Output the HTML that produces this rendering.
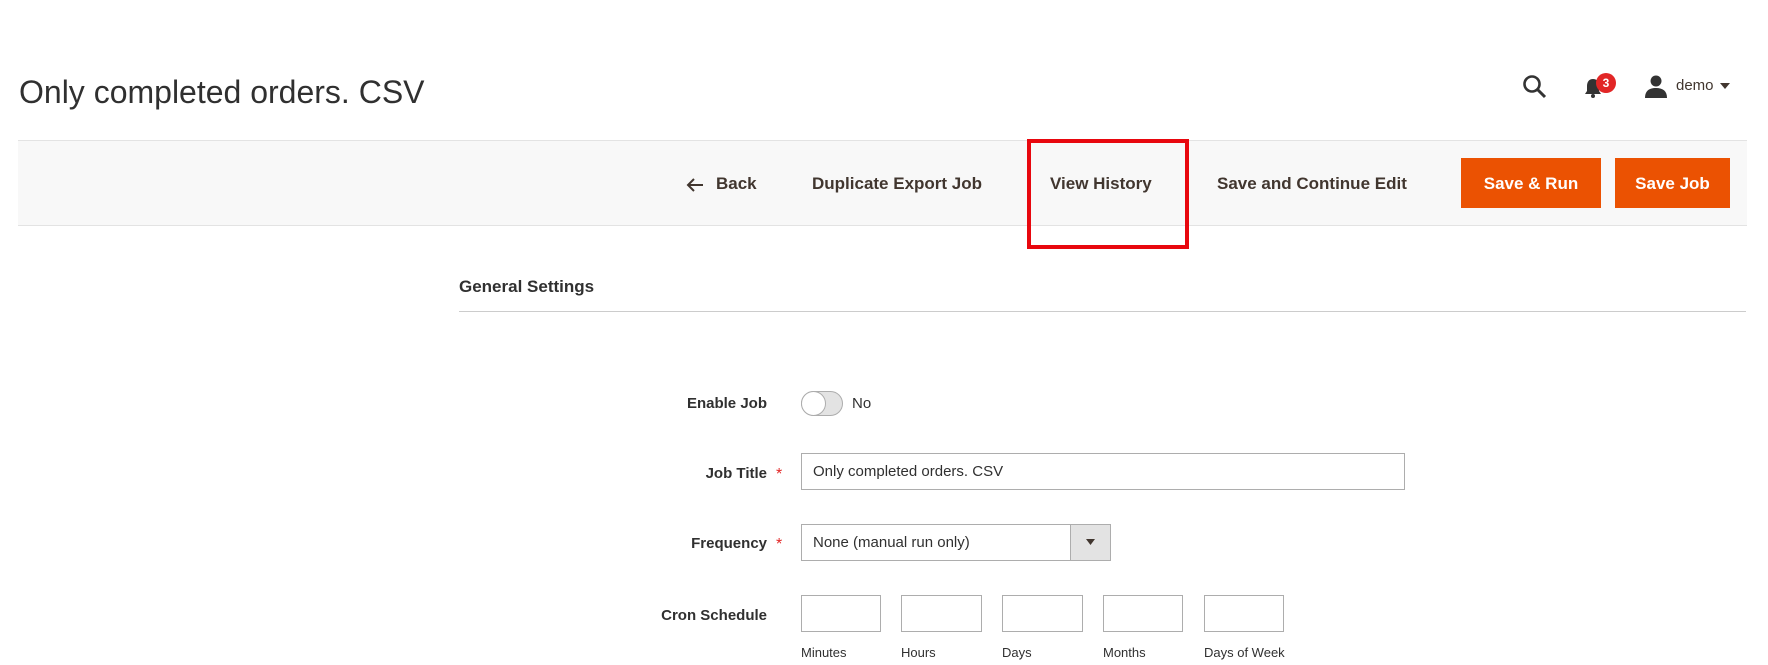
<!DOCTYPE html>
<html><head><meta charset="utf-8"><style>
*{margin:0;padding:0;box-sizing:border-box}
body{width:1768px;height:665px;background:#fff;font-family:"Liberation Sans",sans-serif;color:#303030;position:relative;overflow:hidden}
.a{position:absolute;white-space:nowrap}
.tb{left:18px;top:140px;width:1729px;height:86px;background:#f8f8f8;border-top:1px solid #e3e3e3;border-bottom:1px solid #e3e3e3}
.tl{font-size:17px;font-weight:bold;color:#41362f;top:174px}
.btn{background:#eb5202;color:#fff;font-size:17px;font-weight:bold;top:158px;height:50px;line-height:52px;text-align:center}
.lbl{font-size:15px;font-weight:bold;color:#303030;text-align:right;width:200px}
.star{color:#e22626;font-size:16px}
.inp{border:1px solid #adadad;background:#fff}
.sm{font-size:13px;color:#303030;top:645px}
</style></head><body>
<div class="a" style="left:19px;top:74px;font-size:32px;color:#303030">Only completed orders. CSV</div>

<svg class="a" style="left:1522px;top:74px" width="26" height="26" viewBox="0 0 26 26"><circle cx="10" cy="10" r="7.5" fill="none" stroke="#333" stroke-width="2.6"/><path d="M15.5 15.5L23 23" stroke="#333" stroke-width="3"/></svg>
<svg class="a" style="left:1583px;top:77px" width="20" height="22" viewBox="0 0 20 22"><path d="M10 2c-4 0-6 3-6 7v5l-2 3h16l-2-3V9c0-4-2-7-6-7z" fill="#333"/><circle cx="10" cy="19" r="2" fill="#333"/></svg>
<div class="a" style="left:1596px;top:73px;width:20px;height:20px;border-radius:50%;background:#e22626;color:#fff;font-size:12px;font-weight:bold;text-align:center;line-height:20px">3</div>
<svg class="a" style="left:1644px;top:74px" width="24" height="24" viewBox="0 0 24 24"><circle cx="12" cy="7" r="5.5" fill="#333"/><path d="M1 24c0-7 4-10 11-10s11 3 11 10z" fill="#333"/></svg>
<div class="a" style="left:1676px;top:77px;font-size:15px;color:#41362f">demo</div>
<svg class="a" style="left:1720px;top:83px" width="10" height="6"><path d="M0 0h10L5 6z" fill="#41362f"/></svg>

<div class="a tb"></div>
<svg class="a" style="left:686px;top:178px" width="18" height="14" viewBox="0 0 18 14"><path d="M17 7H3M8 1L2 7l6 6" fill="none" stroke="#41362f" stroke-width="2"/></svg>
<div class="a tl" style="left:716px">Back</div>
<div class="a tl" style="left:812px">Duplicate Export Job</div>
<div class="a tl" style="left:1050px">View History</div>
<div class="a tl" style="left:1217px">Save and Continue Edit</div>
<div class="a btn" style="left:1461px;width:140px">Save &amp; Run</div>
<div class="a btn" style="left:1615px;width:115px">Save Job</div>
<div class="a" style="left:1027px;top:139px;width:162px;height:110px;border:4px solid #e8070e"></div>

<div class="a" style="left:459px;top:277px;font-size:17px;font-weight:bold;color:#303030">General Settings</div>
<div class="a" style="left:459px;top:311px;width:1287px;height:1px;background:#ccc"></div>

<div class="a lbl" style="left:567px;top:395px">Enable Job</div>
<div class="a" style="left:801px;top:391px;width:42px;height:25px;border:1px solid #adadad;border-radius:13px;background:#e3e3e3"></div>
<div class="a" style="left:801px;top:391px;width:25px;height:25px;border:1px solid #adadad;border-radius:50%;background:#fff"></div>
<div class="a" style="left:852px;top:395px;font-size:15px">No</div>

<div class="a lbl" style="left:567px;top:465px">Job Title</div>
<div class="a star" style="left:776px;top:466px">*</div>
<div class="a inp" style="left:801px;top:453px;width:604px;height:37px"></div>
<div class="a" style="left:813px;top:463px;font-size:15px">Only completed orders. CSV</div>

<div class="a lbl" style="left:567px;top:535px">Frequency</div>
<div class="a star" style="left:776px;top:536px">*</div>
<div class="a inp" style="left:801px;top:524px;width:310px;height:37px"></div>
<div class="a" style="left:1070px;top:525px;width:40px;height:35px;background:#e3e3e3;border-left:1px solid #adadad"></div>
<svg class="a" style="left:1086px;top:539px" width="9" height="6"><path d="M0 0h9L4.5 6z" fill="#41362f"/></svg>
<div class="a" style="left:813px;top:534px;font-size:15px">None (manual run only)</div>

<div class="a lbl" style="left:567px;top:607px">Cron Schedule</div>
<div class="a inp" style="left:801px;top:595px;width:80px;height:37px"></div>
<div class="a inp" style="left:901px;top:595px;width:81px;height:37px"></div>
<div class="a inp" style="left:1002px;top:595px;width:81px;height:37px"></div>
<div class="a inp" style="left:1103px;top:595px;width:80px;height:37px"></div>
<div class="a inp" style="left:1204px;top:595px;width:80px;height:37px"></div>
<div class="a sm" style="left:801px">Minutes</div>
<div class="a sm" style="left:901px">Hours</div>
<div class="a sm" style="left:1002px">Days</div>
<div class="a sm" style="left:1103px">Months</div>
<div class="a sm" style="left:1204px">Days of Week</div>
</body></html>
